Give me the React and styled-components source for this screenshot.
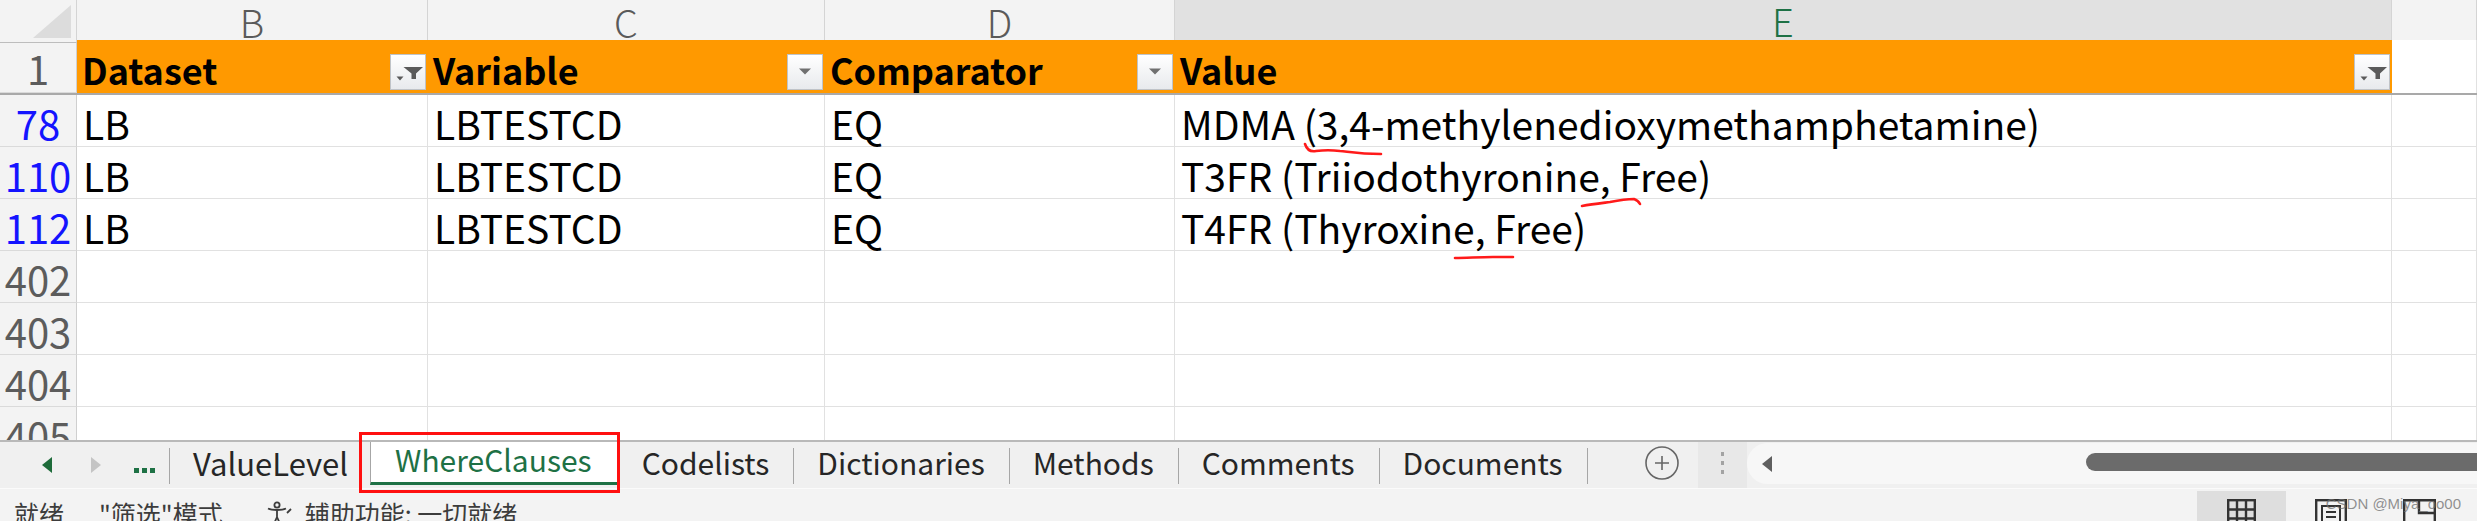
import React from "react";
import styled, { createGlobalStyle } from "styled-components";

const GlobalStyle = createGlobalStyle`
  html, body {
    margin: 0;
    padding: 0;
    background: #ffffff;
  }
  body {
    font-family: "Noto Sans CJK SC", "Noto Sans", sans-serif;
  }
`;

const COLS = "77px 351px 397px 350px 1217px 1fr";
const GREEN = "#1e7145";

const Frame = styled.div`
  position: relative;
  width: 2477px;
  height: 521px;
  overflow: hidden;
  display: flex;
  flex-direction: column;
  background: #ffffff;
`;

const Sheet = styled.div`
  position: relative;
  flex: none;
  height: 440px;
  overflow: hidden;
`;

const Row = styled.div`
  display: grid;
  grid-template-columns: ${COLS};
  height: ${(p) => p.$h}px;
  box-sizing: border-box;
  border-bottom: ${(p) => (p.$frozen ? "2px solid #a9a9a9" : "none")};
`;

const Corner = styled.div`
  position: relative;
  background: #f3f3f3;
  border-right: 1px solid #d4d4d4;
  border-bottom: 1px solid #bdbdbd;
  &::after {
    content: "";
    position: absolute;
    right: 5px;
    bottom: 4px;
    border-style: solid;
    border-width: 0 0 33px 38px;
    border-color: transparent transparent #dcdcdc transparent;
  }
`;

const ColHead = styled.div`
  display: flex;
  align-items: center;
  justify-content: center;
  box-sizing: border-box;
  background: ${(p) => (p.$active ? "#e1e1e1" : "#f3f3f3")};
  color: ${(p) => (p.$active ? GREEN : "#5a5a5a")};
  border-right: 1px solid #d4d4d4;
  border-bottom: ${(p) => (p.$active ? `3px solid ${GREEN}` : "1px solid #bdbdbd")};
  font-size: 38px;
  font-weight: 300;
  line-height: 1;
  padding-top: 2px;
`;

const RowHead = styled.div`
  display: flex;
  align-items: center;
  justify-content: center;
  box-sizing: border-box;
  background: #f3f3f3;
  border-right: 1px solid #cfcfcf;
  border-bottom: 1px solid #dadada;
  font-size: 40px;
  line-height: 1;
  padding-top: 4px;
  color: ${(p) => (p.$blue ? "#1414ff" : "#5c5c5c")};
`;

const HeadCell = styled.div`
  display: flex;
  align-items: center;
  justify-content: space-between;
  box-sizing: border-box;
  background: ${(p) => (p.$blank ? "#ffffff" : "#ff9900")};
  border-right: 1px solid ${(p) => (p.$blank ? "#e1e1e1" : "#ff9900")};
  padding-left: 5px;
  font-size: 36px;
  font-weight: 700;
  line-height: 1;
  color: #000000;
`;

const HeadLabel = styled.span`
  padding-top: 4px;
`;

const FilterBtn = styled.div`
  align-self: flex-end;
  flex: none;
  width: 36px;
  height: 36px;
  margin: 0 1px 3px 0;
  box-sizing: border-box;
  border: 1px solid #bfc3c8;
  background: linear-gradient(#ffffff, #e8eaed);
  display: flex;
  align-items: center;
  justify-content: center;
`;

const Cell = styled.div`
  display: flex;
  align-items: center;
  box-sizing: border-box;
  border-right: 1px solid #e1e1e1;
  border-bottom: 1px solid #e1e1e1;
  padding: 6px 0 0 6px;
  font-size: 39px;
  line-height: 1;
  color: #000000;
  white-space: pre;
`;

const Mark = styled.span`
  position: relative;
  display: inline-block;
`;

const Squiggle = styled.svg`
  position: absolute;
  left: 0;
  top: 100%;
  overflow: visible;
  pointer-events: none;
`;

const TabBar = styled.div`
  flex: none;
  height: 48px;
  box-sizing: border-box;
  border-top: 2px solid #b9b9b9;
  background: #f0f0f0;
  display: flex;
  align-items: stretch;
`;

const Nav = styled.div`
  display: flex;
  align-items: center;
  padding-left: 22px;
`;

const NavBtn = styled.div`
  width: 49px;
  height: 100%;
  display: flex;
  align-items: center;
  justify-content: center;
  gap: 3px;
  padding-top: ${(p) => (p.$dots ? "10px" : "0")};
  box-sizing: border-box;
`;

const Dot = styled.span`
  width: 5px;
  height: 5px;
  background: ${GREEN};
`;

const Tab = styled.div`
  position: relative;
  display: flex;
  align-items: center;
  padding: 0 ${(p) => p.$pr || 24}px 6px 24px;
  font-size: ${(p) => p.$fs || 30}px;
  line-height: 1;
  color: #262626;
  white-space: nowrap;
  &::before {
    content: "";
    display: ${(p) => (p.$sep ? "block" : "none")};
    position: absolute;
    left: 0;
    top: 6px;
    height: 36px;
    width: 1px;
    background: #a6a6a6;
  }
`;

const ActiveTab = styled.div`
  position: relative;
  align-self: flex-start;
  height: 43px;
  box-sizing: border-box;
  display: flex;
  align-items: center;
  padding: 0 26px 6px 24px;
  background: #ffffff;
  border-left: 1px solid #a6a6a6;
  border-bottom: 3px solid ${GREEN};
  font-size: 30px;
  line-height: 1;
  color: ${GREEN};
  white-space: nowrap;
`;

const RedBox = styled.div`
  position: absolute;
  left: -12px;
  right: -2px;
  top: -10px;
  bottom: -11px;
  border: 3px solid #ff1010;
  z-index: 5;
  pointer-events: none;
`;

const EndSep = styled.div`
  width: 1px;
  height: 36px;
  margin-top: 6px;
  background: #a6a6a6;
`;

const AddBtn = styled.div`
  margin-left: 56px;
  display: flex;
  align-items: center;
  padding-bottom: 4px;
`;

const Splitter = styled.div`
  margin-left: 18px;
  width: 49px;
  background: #e8e8e8;
  display: flex;
  flex-direction: column;
  align-items: center;
  justify-content: center;
  gap: 5px;
  padding-bottom: 4px;
  box-sizing: border-box;
`;

const SplitDot = styled.span`
  width: 3px;
  height: 4px;
  background: #a3a3a3;
`;

const ScrollArea = styled.div`
  flex: 1;
  align-self: flex-start;
  height: 41px;
  margin-top: 1px;
  background: #f7f7f7;
  border-radius: 21px 0 0 21px;
  display: flex;
  align-items: center;
  padding-left: 15px;
`;

const Thumb = styled.div`
  margin-left: auto;
  width: 391px;
  height: 18px;
  margin-bottom: 4px;
  background: #6b6b6b;
  border-radius: 9px 0 0 9px;
`;

const StatusBar = styled.div`
  flex: none;
  height: 33px;
  box-sizing: border-box;
  border-top: 1px solid #fbfbfb;
  background: #f3f3f3;
  display: flex;
  align-items: flex-start;
  padding-left: 14px;
  font-size: 25px;
  line-height: 1;
  color: #3c3c3c;
  overflow: hidden;
`;

const StatusItem = styled.span`
  margin-top: 12px;
  margin-right: ${(p) => p.$gap}px;
  white-space: nowrap;
  display: flex;
  align-items: flex-start;
`;

const Views = styled.div`
  margin-left: auto;
  margin-right: 13px;
  margin-top: 2px;
  display: flex;
  height: 40px;
`;

const ViewBtn = styled.div`
  width: 89px;
  display: flex;
  justify-content: center;
  padding-top: 8px;
  box-sizing: border-box;
  background: ${(p) => (p.$on ? "#dedede" : "transparent")};
`;

const Watermark = styled.div`
  position: absolute;
  right: 16px;
  bottom: 9px;
  font-family: "Liberation Sans", Arial, sans-serif;
  font-size: 15px;
  color: rgba(110, 110, 110, 0.75);
  pointer-events: none;
`;

function FunnelIcon() {
  return (
    <svg width="34" height="34" viewBox="0 0 34 34">
      <path d="M12.5 12 H32 L25 18.5 V24 H20.5 V18.5 Z" fill="#5a5a5a" />
      <path d="M5.5 21.5 H12.5 L9 25.5 Z" fill="#5a5a5a" />
    </svg>
  );
}

function ArrowIcon() {
  return (
    <svg width="34" height="34" viewBox="0 0 34 34">
      <path d="M11 13.5 H23 L17 19.5 Z" fill="#707070" />
    </svg>
  );
}

function FilterButton({ active }) {
  return <FilterBtn>{active ? <FunnelIcon /> : <ArrowIcon />}</FilterBtn>;
}

function Triangle({ dir, color }) {
  const d = dir === "left" ? "M10 0 V16 L0 8 Z" : "M0 0 V16 L10 8 Z";
  return (
    <svg width="10" height="16" viewBox="0 0 10 16">
      <path d={d} fill={color} />
    </svg>
  );
}

function AccessIcon() {
  return (
    <svg width="26" height="26" viewBox="0 0 26 26" fill="none" stroke="#3c3c3c" strokeWidth="1.8">
      <circle cx="10" cy="4" r="2.6" />
      <path d="M1 7.5 C5 9.5 15 9.5 19 7.5" />
      <path d="M10 9.5 V16 L6 25 M10 16 L14 25" />
      <path d="M20 12 L24 8" />
    </svg>
  );
}

function GridIcon() {
  return (
    <svg width="29" height="30" viewBox="0 0 29 30" fill="none" stroke="#333" strokeWidth="2.4">
      <rect x="1.2" y="1.2" width="26.6" height="27.6" />
      <path d="M10 1 V29 M19 1 V29 M1 10.5 H28 M1 19.5 H28" />
    </svg>
  );
}

function PageIcon() {
  return (
    <svg width="32" height="30" viewBox="0 0 32 30" fill="none" stroke="#333" strokeWidth="2.4">
      <rect x="1.2" y="1.2" width="29.6" height="27.6" />
      <rect x="7" y="7" width="18" height="22" strokeWidth="2" />
      <path d="M11 13 H21 M11 18 H21 M11 23 H21" strokeWidth="2" />
    </svg>
  );
}

function BreakIcon() {
  return (
    <svg width="33" height="30" viewBox="0 0 33 30" fill="none" stroke="#333" strokeWidth="2.4">
      <path d="M1.2 29 V1.2 H31.8 V29" />
      <path d="M16 1 V14 H31.5" />
    </svg>
  );
}

// red hand-drawn marks, in px relative to the marked glyph (top = just under baseline)
const scribbles = {
  paren: "M1 1 C3 7 7 9 12 8 C20 7 28 7 36 8 C46 9 56 11 77 11",
  comma: "M4 11 C14 9 24 8 32 7 C42 5 50 4 56 4 C59 5 61 7 62 9",
  flat: "M2 11 C14 11 26 10 40 10 C50 10 56 10 60 10",
};

function ValueText({ text, mark }) {
  if (!mark) return text;
  const at = text.indexOf(mark.find);
  return (
    <>
      {text.slice(0, at)}
      <Mark>
        {text[at]}
        <Squiggle width="80" height="16" viewBox="0 0 80 16">
          <path d={scribbles[mark.kind]} fill="none" stroke="#ff1a1a" strokeWidth="2.6" strokeLinecap="round" />
        </Squiggle>
      </Mark>
      {text.slice(at + 1)}
    </>
  );
}

const columns = ["B", "C", "D", "E", ""];
const headers = [
  { label: "Dataset", funnel: true },
  { label: "Variable", funnel: false },
  { label: "Comparator", funnel: false },
  { label: "Value", funnel: true },
];

const rows = [
  {
    n: "78",
    blue: true,
    cells: ["LB", "LBTESTCD", "EQ", "MDMA (3,4-methylenedioxymethamphetamine)"],
    mark: { find: "(", kind: "paren" },
  },
  {
    n: "110",
    blue: true,
    cells: ["LB", "LBTESTCD", "EQ", "T3FR (Triiodothyronine, Free)"],
    mark: { find: "e,", kind: "comma" },
  },
  {
    n: "112",
    blue: true,
    cells: ["LB", "LBTESTCD", "EQ", "T4FR (Thyroxine, Free)"],
    mark: { find: "e,", kind: "flat" },
  },
  { n: "402", cells: ["", "", "", ""] },
  { n: "403", cells: ["", "", "", ""] },
  { n: "404", cells: ["", "", "", ""] },
  { n: "405", cells: ["", "", "", ""] },
];

const tabs = ["Codelists", "Dictionaries", "Methods", "Comments", "Documents"];

export default function App() {
  return (
    <Frame>
      <GlobalStyle />
      <Sheet>
        <Row $h={40}>
          <Corner />
          {columns.map((c, i) => (
            <ColHead key={i} $active={c === "E"}>{c}</ColHead>
          ))}
        </Row>
        <Row $h={55} $frozen>
          <RowHead>1</RowHead>
          {headers.map((h) => (
            <HeadCell key={h.label}>
              <HeadLabel>{h.label}</HeadLabel>
              <FilterButton active={h.funnel} />
            </HeadCell>
          ))}
          <HeadCell $blank />
        </Row>
        {rows.map((r) => (
          <Row key={r.n} $h={52}>
            <RowHead $blue={r.blue}>{r.n}</RowHead>
            {r.cells.map((c, i) => (
              <Cell key={i}>
                {i === 3 ? <ValueText text={c} mark={r.mark} /> : c}
              </Cell>
            ))}
            <Cell />
          </Row>
        ))}
      </Sheet>
      <TabBar>
        <Nav>
          <NavBtn><Triangle dir="left" color="#1e6b3a" /></NavBtn>
          <NavBtn><Triangle dir="right" color="#c4c4c4" /></NavBtn>
          <NavBtn $dots>
            <Dot />
            <Dot />
            <Dot />
          </NavBtn>
        </Nav>
        <Tab $sep $fs={31} $pr={22}>ValueLevel</Tab>
        <ActiveTab>
          WhereClauses
          <RedBox />
        </ActiveTab>
        {tabs.map((t, i) => (
          <Tab key={t} $sep={i > 0}>{t}</Tab>
        ))}
        <EndSep />
        <AddBtn>
          <svg width="36" height="36" viewBox="0 0 36 36" fill="none" stroke="#666" strokeWidth="1.6">
            <circle cx="18" cy="18" r="16" />
            <path d="M18 11 V25 M11 18 H25" />
          </svg>
        </AddBtn>
        <Splitter>
          <SplitDot />
          <SplitDot />
          <SplitDot />
        </Splitter>
        <ScrollArea>
          <Triangle dir="left" color="#5f5f5f" />
          <Thumb />
        </ScrollArea>
      </TabBar>
      <StatusBar>
        <StatusItem $gap={35}>就绪</StatusItem>
        <StatusItem $gap={44}>"筛选"模式</StatusItem>
        <StatusItem $gap={12}><AccessIcon /></StatusItem>
        <StatusItem $gap={0}>辅助功能: 一切就绪</StatusItem>
        <Views>
          <ViewBtn $on><GridIcon /></ViewBtn>
          <ViewBtn><PageIcon /></ViewBtn>
          <ViewBtn><BreakIcon /></ViewBtn>
        </Views>
      </StatusBar>
      <Watermark>CSDN @Miya_oo00</Watermark>
    </Frame>
  );
}
